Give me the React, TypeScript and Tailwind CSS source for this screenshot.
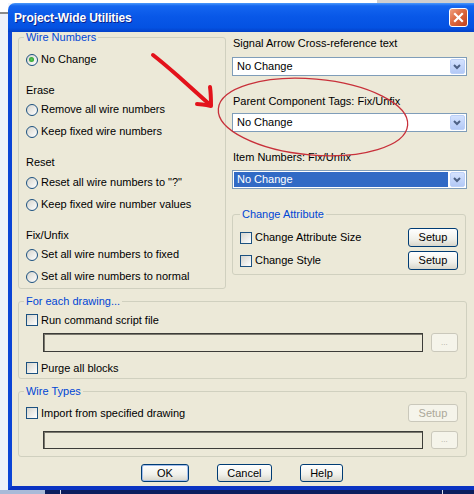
import React from "react";

const FONT = "font-['Liberation_Sans_Narrow','Liberation_Sans',sans-serif]";

function RadioBox({ checked }: { checked?: boolean }) {
  return (
    <span className="w-[12px] h-[12px] shrink-0 rounded-full border border-[#1C5180] bg-[linear-gradient(135deg,#D6D5CE,#FFFFFF)] flex items-center justify-center">
      {checked && <span className="w-[5px] h-[5px] rounded-full bg-[radial-gradient(circle,#5BC85B,#1E941E)]" />}
    </span>
  );
}

function Radio({ checked, label, className = "" }: { checked?: boolean; label: string; className?: string }) {
  return (
    <div className={`flex items-center h-[21px] ${className}`}>
      <RadioBox checked={checked} />
      <span className="ml-[3px] whitespace-nowrap">{label}</span>
    </div>
  );
}

function CheckBox() {
  return (
    <span className="w-[12px] h-[12px] shrink-0 border border-[#1C5180] bg-[linear-gradient(135deg,#D6D5CE,#FFFFFF)]" />
  );
}

function Check({ label, className = "" }: { label: string; className?: string }) {
  return (
    <div className={`flex items-center ${className}`}>
      <CheckBox />
      <span className="ml-[3px] whitespace-nowrap">{label}</span>
    </div>
  );
}

function Chevron() {
  return (
    <svg width="8" height="6" viewBox="0 0 8 6">
      <path d="M1 1 L4 4 L7 1" fill="none" stroke="#4D6185" strokeWidth="2" />
    </svg>
  );
}

function Select({ highlighted, className = "" }: { highlighted?: boolean; className?: string }) {
  return (
    <div className={`h-[19px] border border-[#7F9DB9] bg-white flex p-[1px] ${className}`}>
      <div className={`flex-1 flex items-center pl-[3px] ${highlighted ? "bg-[#316AC5] text-white" : ""}`}>No Change</div>
      <div className="w-[15px] ml-[2px] rounded-[2px] border border-[#BCD0F8] bg-[linear-gradient(to_bottom,#D4E2FE,#B3C9F6)] flex items-center justify-center">
        <Chevron />
      </div>
    </div>
  );
}

function Btn({
  children,
  className = "",
  disabled,
  def,
}: {
  children: React.ReactNode;
  className?: string;
  disabled?: boolean;
  def?: boolean;
}) {
  if (disabled) {
    return (
      <div className={`h-[18px] rounded-[3px] border border-[#CAC8BB] bg-[#F5F4EA] text-[#ACA899] flex items-center justify-center ${className}`}>
        {children}
      </div>
    );
  }
  return (
    <div
      className={`h-[18px] rounded-[3px] border border-[#003C74] bg-[linear-gradient(to_bottom,#FFFFFF,#F0F0EA_60%,#D8D6CB)] text-black flex items-center justify-center ${
        def ? "shadow-[inset_0_0_0_1px_#A4BEEB]" : ""
      } ${className}`}
    >
      {children}
    </div>
  );
}

function TextBox({ className = "", h = "h-[19px]" }: { className?: string; h?: string }) {
  return (
    <div className={`${h} border border-[#3C3C38] bg-[#ECE9D8] shadow-[inset_1px_1px_0_#7A786E] ${className}`} />
  );
}

function Dots({ h = "h-[19px]" }: { h?: string }) {
  return (
    <div className={`w-[27px] ${h} ml-[8px] rounded-[3px] border border-[#CAC8BB] bg-[#F5F4EA] text-[#ACA899] text-[8px] flex items-center justify-center leading-none`}>
      ...
    </div>
  );
}

export default function App() {
  return (
    <div className={`relative w-[474px] h-[494px] overflow-hidden bg-[#F3F5FA] text-[11px] text-black ${FONT}`}>
      {/* top strip above window */}
      <div className="h-[3px] flex">
        <div className="w-[377px] bg-white" />
        <div className="flex-1 bg-[#CFCFCF]" />
      </div>
      <div className="flex">
        {/* left screen strip */}
        <div className="w-[8px] flex flex-col">
          <div className="h-[9px] bg-white" />
          <div className="h-[2px] bg-[#8A8A8A]" />
          <div className="flex-1 bg-[#EEF1F9]" />
        </div>
        {/* window */}
        <div className="w-[470px] flex flex-col">
          {/* title bar */}
          <div className="h-[29px] rounded-tl-[7px] bg-[linear-gradient(to_bottom,#4C9AFB_0%,#1466F0_10%,#0958E8_45%,#0452E2_85%,#0340C8_100%)] flex items-center justify-between pl-[6px] pr-[6px]">
            <span className="font-['Liberation_Sans',sans-serif] font-bold text-[12px] text-white [text-shadow:1px_1px_0_#0A1F8A] tracking-[-0.1px]">
              Project-Wide Utilities
            </span>
            <div className="w-[19px] h-[19px] rounded-[3px] border border-white bg-[linear-gradient(135deg,#F0A080,#DD6A40_45%,#C2401C)] flex items-center justify-center">
              <svg width="11" height="11" viewBox="0 0 11 11">
                <path d="M2 2 L9 9 M9 2 L2 9" stroke="white" strokeWidth="2.2" strokeLinecap="square" />
              </svg>
            </div>
          </div>
          {/* body */}
          <div className="h-[458px] border-l-[4px] border-b-[4px] border-l-[#0B44D6] border-b-[#0A33C2] bg-[#ECE9D8] flex flex-col pl-[6px]">
            <div className="flex items-start gap-[6px]">
              {/* Wire Numbers group */}
              <fieldset className="w-[208px] border border-[#D0D0BF] rounded-[3px]">
                <legend className="ml-[5px] px-[2px] h-[10px] leading-[10px] text-[#0046D5]">Wire Numbers</legend>
                <div className="pl-[7px] pb-[1px] flex flex-col">
                  <Radio checked label="No Change" className="mt-[7px]" />
                  <div className="h-[16px] leading-[16px] mt-[12px]">Erase</div>
                  <Radio label="Remove all wire numbers" className="mt-[1px]" />
                  <Radio label="Keep fixed wire numbers" className="mt-[1px]" />
                  <div className="h-[16px] leading-[16px] mt-[12px]">Reset</div>
                  <Radio label={'Reset all wire numbers to "?"'} className="mt-[2px]" />
                  <Radio label="Keep fixed wire number values" className="mt-[1px]" />
                  <div className="h-[16px] leading-[16px] mt-[12px]">Fix/Unfix</div>
                  <Radio label="Set all wire numbers to fixed" className="mt-[1px]" />
                  <Radio label="Set all wire numbers to normal" className="mt-[1px]" />
                </div>
              </fieldset>
              {/* right column */}
              <div className="w-[235px] flex flex-col">
                <div className="h-[16px] leading-[16px] mt-[3px] pl-[1px]">Signal Arrow Cross-reference text</div>
                <Select className="mt-[6px]" />
                <div className="h-[16px] leading-[16px] mt-[17px] pl-[1px]">Parent Component Tags: Fix/Unfix</div>
                <Select className="mt-[4px]" />
                <div className="h-[16px] leading-[16px] mt-[17px] pl-[1px]">Item Numbers: Fix/Unfix</div>
                <Select highlighted className="mt-[5px]" />
                <fieldset className="w-[234px] mt-[20px] border border-[#D0D0BF] rounded-[3px]">
                  <legend className="ml-[7px] px-[2px] h-[10px] leading-[10px] text-[#0046D5]">Change Attribute</legend>
                  <div className="pl-[7px] pr-[7px] pb-[4px] flex flex-col">
                    <div className="mt-[9px] h-[19px] flex items-center justify-between">
                      <Check label="Change Attribute Size" />
                      <Btn className="w-[50px] h-[19px]">Setup</Btn>
                    </div>
                    <div className="mt-[4px] h-[19px] flex items-center justify-between">
                      <Check label="Change Style" />
                      <Btn className="w-[50px] h-[19px]">Setup</Btn>
                    </div>
                  </div>
                </fieldset>
              </div>
            </div>

            {/* For each drawing group */}
            <fieldset className="w-[449px] mt-[7px] border border-[#D0D0BF] rounded-[3px]">
              <legend className="ml-[5px] px-[2px] h-[10px] leading-[10px] text-[#0046D5]">For each drawing...</legend>
              <div className="pl-[7px] pb-[2px] flex flex-col">
                <Check label="Run command script file" className="mt-[6px] h-[16px]" />
                <div className="mt-[5px] flex pl-[17px]">
                  <TextBox className="w-[380px]" />
                  <Dots />
                </div>
                <Check label="Purge all blocks" className="mt-[8px] h-[16px]" />
              </div>
            </fieldset>

            {/* Wire Types group */}
            <fieldset className="w-[449px] mt-[7px] border border-[#D0D0BF] rounded-[3px]">
              <legend className="ml-[5px] px-[2px] h-[10px] leading-[10px] text-[#0046D5]">Wire Types</legend>
              <div className="pl-[7px] pr-[8px] pb-[7px] flex flex-col">
                <div className="mt-[8px] h-[18px] flex items-center justify-between">
                  <Check label="Import from specified drawing" />
                  <Btn disabled className="w-[50px]">Setup</Btn>
                </div>
                <div className="mt-[9px] flex pl-[17px]">
                  <TextBox className="w-[380px]" h="h-[18px]" />
                  <Dots h="h-[18px]" />
                </div>
              </div>
            </fieldset>

            {/* bottom buttons */}
            <div className="mt-[7px] flex ml-[123px] gap-[28px]">
              <Btn def className="w-[48px]">OK</Btn>
              <Btn className="w-[55px]">Cancel</Btn>
              <Btn className="w-[43px]">Help</Btn>
            </div>
          </div>
        </div>
      </div>
      {/* taskbar strip */}
      <div className="h-[4px] flex">
        <div className="w-[45px] bg-[#A9BAD8]" />
        <div className="w-[15px] bg-[#0B1E5E]" />
        <div className="w-[1px] bg-[#D8E0F0]" />
        <div className="w-[381px] bg-[#0B1E5E]" />
        <div className="w-[1px] bg-[#D8E0F0]" />
        <div className="flex-1 bg-[#0B1E5E]" />
      </div>

      {/* red hand-drawn annotations */}
      <svg className="absolute inset-0 pointer-events-none" width="474" height="494" viewBox="0 0 474 494">
        <path
          d="M153 55 C 162 62, 170 69, 178 76 C 188 85, 198 94, 208 103"
          fill="none"
          stroke="#E3121B"
          strokeWidth="4"
          strokeLinecap="round"
        />
        <path
          d="M210 87 C 211 94, 211 100, 211 106 C 206 105, 201 104, 197 104"
          fill="none"
          stroke="#E3121B"
          strokeWidth="4"
          strokeLinecap="round"
          strokeLinejoin="round"
        />
        <ellipse
          cx="313"
          cy="117"
          rx="95"
          ry="38"
          transform="rotate(5 313 117)"
          fill="none"
          stroke="#C8303A"
          strokeWidth="1.3"
        />
      </svg>
    </div>
  );
}
